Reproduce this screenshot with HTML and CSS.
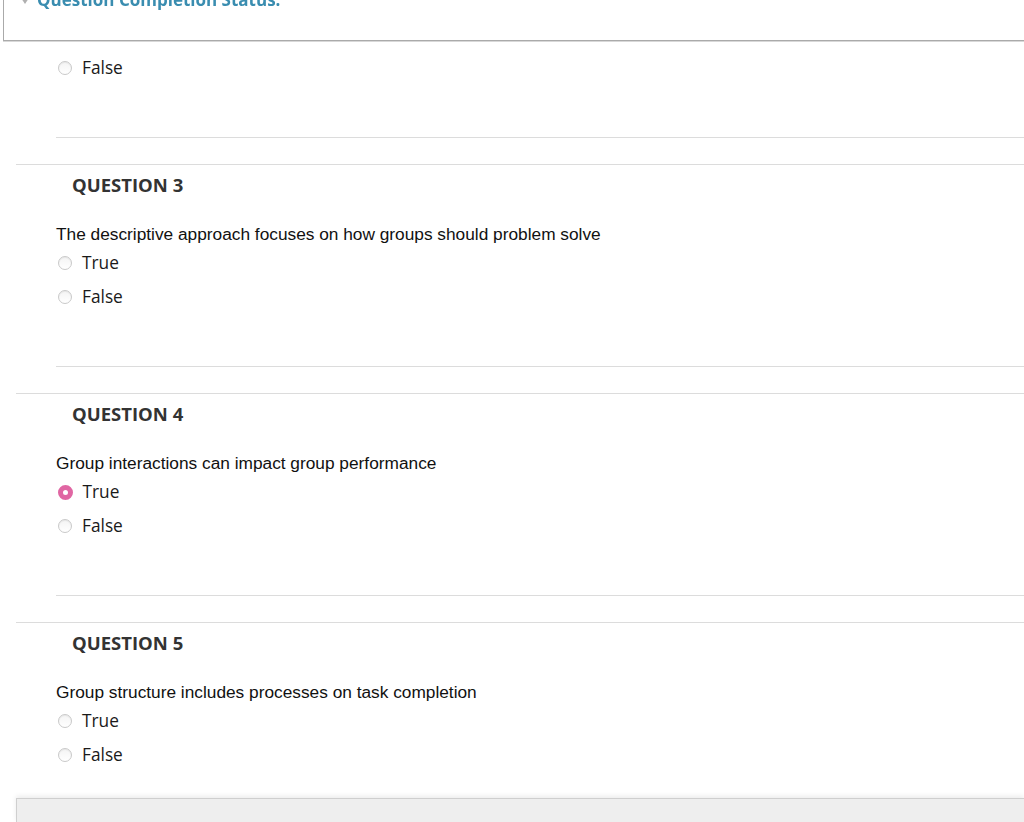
FILE: index.html
```html
<!DOCTYPE html>
<html lang="en">
<head>
<meta charset="utf-8">
<title>Test</title>
<link rel="stylesheet" href="styles.css">
</head>
<body>
<div class="status-bar">
  <div class="status-title">
    <svg class="caret" width="10" height="8" viewBox="0 0 10 8"><path d="M1 1 L9 1 L5 7 Z" fill="#b0b0b0"/></svg>
    <span>Question Completion Status:</span>
  </div>
</div>

<main class="page">
  <section class="question first">
    <ul class="options">
      <li><span class="radio"></span><span class="label">True</span></li>
      <li><span class="radio"></span><span class="label">False</span></li>
    </ul>
    <div class="divider"></div>
  </section>

  <section class="question">
    <h3 class="qhead">QUESTION 3</h3>
    <p class="qtext">The descriptive approach focuses on how groups should problem solve</p>
    <ul class="options">
      <li><span class="radio"></span><span class="label">True</span></li>
      <li><span class="radio"></span><span class="label">False</span></li>
    </ul>
    <div class="divider"></div>
  </section>

  <section class="question">
    <h3 class="qhead">QUESTION 4</h3>
    <p class="qtext">Group interactions can impact group performance</p>
    <ul class="options">
      <li><span class="radio checked"></span><span class="label">True</span></li>
      <li><span class="radio"></span><span class="label">False</span></li>
    </ul>
    <div class="divider"></div>
  </section>

  <section class="question">
    <h3 class="qhead">QUESTION 5</h3>
    <p class="qtext">Group structure includes processes on task completion</p>
    <ul class="options">
      <li><span class="radio"></span><span class="label">True</span></li>
      <li><span class="radio"></span><span class="label">False</span></li>
    </ul>
    <div class="divider"></div>
  </section>
</main>

<div class="footer-bar"></div>
</body>
</html>
```

FILE: styles.css
```css
html, body {
  margin: 0;
  padding: 0;
  background: #fff;
}

body {
  font-family: "Open Sans", "Liberation Sans", Arial, sans-serif;
  color: #222;
}

.status-bar {
  position: fixed;
  top: 0;
  left: 3px;
  right: 0;
  height: 40px;
  background: #fff;
  border-left: 1px solid #aaa;
  border-bottom: 1px solid #aaa;
  box-shadow: 0 1px 0 #d8d8d8;
  overflow: hidden;
  z-index: 10;
}

.status-title {
  display: flex;
  align-items: center;
  gap: 7px;
  margin-top: -12px;
  padding-left: 16px;
  font-family: "Open Sans", sans-serif;
  font-weight: 700;
  font-size: 17px;
  line-height: 24px;
  color: #3a8db0;
}

.caret {
  margin-top: 2px;
}

.page {
  padding: 0 0 0 16px;
}

.question {
  border-top: 1px solid #dcdcdc;
  padding-top: 8px;
}

.question.first {
  border-top: none;
  padding-top: 15px;
}

.qhead {
  margin: 0;
  padding-left: 56px;
  font-family: "Open Sans", sans-serif;
  font-weight: 700;
  font-size: 18.5px;
  line-height: 24px;
  color: #333;
}

.qtext {
  margin: 27px 0 0 0;
  padding-left: 40px;
  font-family: "Liberation Sans", Arial, sans-serif;
  font-size: 17.3px;
  line-height: 20px;
  color: #111;
}

.options {
  list-style: none;
  margin: 7px 0 0 0;
  padding: 0 0 0 40px;
}

.options li {
  display: flex;
  align-items: center;
  height: 24px;
  margin-bottom: 10px;
}

.radio {
  box-sizing: border-box;
  width: 14px;
  height: 14px;
  margin-left: 2px;
  border-radius: 50%;
  border: 1px solid #c9c9c9;
  background: linear-gradient(#f4f4f4, #fff);
  box-shadow: inset 0 1px 1px rgba(0,0,0,0.06);
}

.radio.checked {
  width: 15px;
  height: 15px;
  margin-left: 1.5px;
  border: 5px solid #e066a3;
  background: #fff;
  box-shadow: none;
}

.label {
  margin-left: 10px;
  font-family: "Open Sans", sans-serif;
  font-size: 17.3px;
  line-height: 24px;
  color: #1a1a1a;
}

.divider {
  margin: 57px 0 26px 40px;
  border-top: 1px solid #dcdcdc;
}

.footer-bar {
  position: fixed;
  left: 16px;
  right: 0;
  bottom: 0;
  height: 23px;
  background: #eeeeee;
  border: 1px solid #cfcfcf;
  border-right: none;
  border-bottom: none;
  box-shadow: 0 -2px 5px rgba(0,0,0,0.08);
}
```
